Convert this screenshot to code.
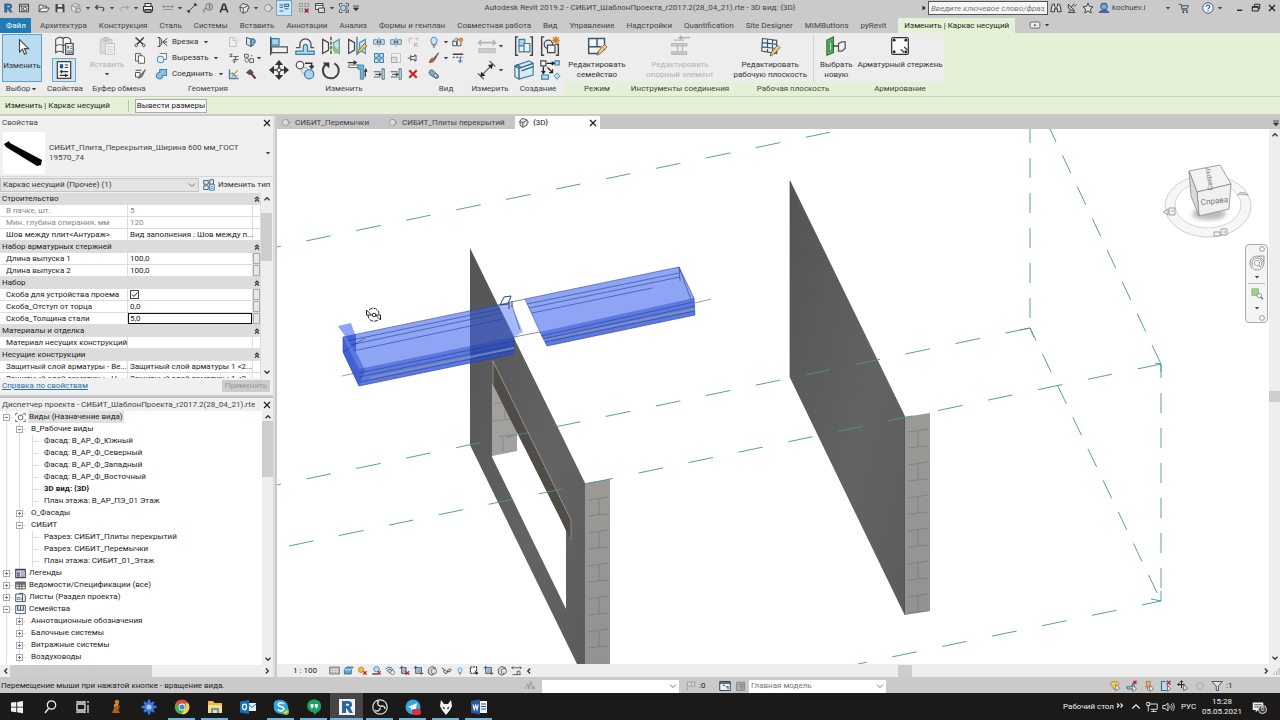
<!DOCTYPE html>
<html lang="ru">
<head>
<meta charset="utf-8">
<title>Autodesk Revit 2019.2</title>
<style>
  html, body {
    margin: 0;
    height: 100%;
  }

  body {
    font: 8px/12px Roboto, "Open Sans", sans-serif;
    color: #333;
    background: #cacaca;
    overflow: hidden;
  }
</style>
</head>
<body>
<revit-app></revit-app>

<script>
// ICONS: [viewBox size, markup]
const icons = {
  down: [8, '<path d="M1.8 3h4.4L4 5.6z" fill="#444"/>'],
  chevron: [8, '<path d="M1 2.5 4 5.5 7 2.5" fill="none" stroke="#777"/>'],
  close: [8, '<path d="M1 1l6 6M7 1 1 7" fill="none" stroke="#222" stroke-width="1.3"/>'],
  up: [8, '<path d="M1.5 5.2 4 2.7l2.5 2.5" fill="none" stroke="#333" stroke-width="1.3"/>'],
  dn: [8, '<path d="M1.5 2.8 4 5.3l2.5-2.5" fill="none" stroke="#333" stroke-width="1.3"/>'],
  lt: [8, '<path d="M5.2 1.5 2.7 4l2.5 2.5" fill="none" stroke="#333" stroke-width="1.3"/>'],
  rt: [8, '<path d="M2.8 1.5 5.3 4 2.8 6.5" fill="none" stroke="#333" stroke-width="1.3"/>'],
  fold: [8, '<path d="M2 4 4 2l2 2M2 6.5l2-2 2 2" fill="none" stroke="#333" stroke-width="1.1"/>'],
  overflow: [8, '<path d="M1 2h6M1.5 4h5L4 6.8z" fill="#333" stroke="#333" stroke-width=".8"/>'],
  play: [8, '<path d="M2.5 1.5 6 4 2.5 6.5z" fill="#333"/>'],

  logo: [16, '<path d="M3 2h6.5c5 0 5 6.500 1.500 7l3.500 5h-4L7.500 9.500H7V14H3z" fill="#2e689c"/><path d="M7 5h2.500c1.500 0 1.500 2 0 2H7z" fill="#cacaca"/>'],
  home: [16, '<rect x="2" y="3" width="12" height="10" fill="#e8e8e8" stroke="#444" stroke-width="1.300"/><path d="M2 5.500h12M5 5v8M7 8l2-1.500 3 2V11H7z" fill="none" stroke="#444" stroke-width="1.200"/>'],
  open: [16, '<path d="M1.500 13V4h4l1 1.500h5V8M1.500 13l3-5h10.500l-3 5z" fill="#eee" stroke="#444" stroke-width="1.200"/>'],
  save: [16, '<path d="M2 2.500h10.500l1.500 1.500v9.500H2z" fill="#444"/><path d="M5 3h6v3.500H5zM4.500 9h7v4.500h-7z" fill="#ddd"/>'],
  cube: [16, '<path d="M2 5l5-3 6 2v6l-5 4-6-3zM2 5l6 2 5-3M8 7v7" fill="#ddd" stroke="#888"/><circle cx="11" cy="11" r="3" fill="#ccc" stroke="#777"/>'],
  undo: [16, '<path d="M5 4 2 7l3 3M2.500 7H10c4 0 4 4 1 5" fill="none" stroke="#444" stroke-width="1.600"/>'],
  redo: [16, '<path d="M11 4l3 3-3 3M13.500 7H6c-4 0-4 4-1 5" fill="none" stroke="#999" stroke-width="1.300"/>'],
  print: [16, '<path d="M4 6V2h8v4M2 6h12v6H2zM4 10h8v4H4z" fill="#eee" stroke="#333" stroke-width="1.400"/>'],
  measure: [16, '<path d="M1 6h14M3 4 1 6l2 2M13 4l2 2-2 2M2 10h12" fill="none" stroke="#888" stroke-width="1.200"/>'],
  dimension: [16, '<path d="M3 13 13 3M1 11l4 4M11 1l4 4" stroke="#333" stroke-width="1.200"/><path d="M2 14l1-4 3 3zM14 2l-1 4-3-3z" fill="#333"/>'],
  tag: [16, '<circle cx="9.500" cy="6.500" r="4.500" fill="none" stroke="#555"/><path d="M3 14 2 11l3-3M9 4.500 10 4v5" fill="none" stroke="#555" stroke-width="1.200"/>'],
  letter: [16, '<path d="M3 14 7 3h2l4 11M5 10h6" fill="none" stroke="#333" stroke-width="2.200"/>'],
  house: [16, '<path d="M2 7l4-5 7 2 2 4-2 1v3l-6 3-4-3V7zM7 15V8l6-3M3 7l4 1" fill="#e4e4e4" stroke="#444" stroke-width="1.200"/>'],
  section: [16, '<path d="M9.500 3.500 14 8l-4.500 4.500" fill="none" stroke="#777" stroke-width="1.400"/><circle cx="8" cy="8" r="4.500" fill="#ddd" stroke="#888"/>'],
  lines: [16, '<path d="M2 4h5M2 7h5M2 12h5M9 3h5v3H9zM9 9h5" fill="none" stroke="#246a98" stroke-width="1.500"/>'],
  closewin: [16, '<path d="M2 2h4v4H2zM2 9h4v4H2zM9 2h5v4H9z" fill="none" stroke="#666" stroke-dasharray="1.500 1"/><path d="M9 9l5 5M14 9l-5 5" stroke="#a01e2c" stroke-width="2"/>'],
  switchwin: [16, '<path d="M2 2h10v8H2zM2 4.500h10" fill="#eee" stroke="#444" stroke-width="1.300"/><path d="M6 8h8v6H6z" fill="#ddd" stroke="#444" stroke-width="1.300"/>'],
  custom: [16, '<path d="M2 6V2h4M10 2h4v4M14 10v4h-4M6 14H2v-4" fill="none" stroke="#555" stroke-width="1.200"/><circle cx="7" cy="8" r="3.500" fill="#bcd8e8" stroke="#456"/><path d="M10 5h2v7H9" fill="none" stroke="#456"/>'],
  binoc: [16, '<path d="M3 3h3v3l1 1h2l1-1V3h3l2 10h-5V9H6v4H1z" fill="#ddd" stroke="#333" stroke-width="1.300"/>'],
  dish: [16, '<path d="M3 3c-1 5 2 9 8 8zM7 7l4-5M6 11l-3 3h9l-3-3M11 6l3-3" fill="none" stroke="#333" stroke-width="1.200"/>'],
  star: [16, '<path d="M8 1.500l2 4.500 4.800.4-3.600 3.200 1.100 4.900L8 12l-4.300 2.500 1.100-4.900L1.200 6.400 6 6z" fill="#ddd" stroke="#333" stroke-width="1.200"/>'],
  user: [16, '<circle cx="8" cy="6" r="4.200" fill="#86a9d8" stroke="#2d5593" stroke-width="1.400"/><path d="M1.500 14c0-4 13-4 13 0z" fill="#3d6db0" stroke="#2d5593"/>'],
  cart: [16, '<path d="M1 3h3l2 8h7M4.500 5H14l-2 4H6" fill="#bcd0e6" stroke="#345" stroke-width="1.200"/><circle cx="7" cy="13.500" r="1.200" fill="#333"/><circle cx="12" cy="13.500" r="1.200" fill="#333"/>'],
  help: [16, '<circle cx="8" cy="8" r="7" fill="#f2f5f8" stroke="#2c567e" stroke-width="1.200"/><path d="M5.800 6.300c0-3 4.600-3 4.600 0 0 1.500-2.300 1.700-2.300 3.400M8 11v1.600" fill="none" stroke="#2c567e" stroke-width="1.500"/>'],
  min: [16, '<path d="M4 11h7" stroke="#222" stroke-width="1.800"/>'],
  restore: [16, '<path d="M6 5V3h7v6h-2M3 6h8v6H3zM3 7h8" fill="none" stroke="#222" stroke-width="1.300"/>'],
  pill: [16, '<rect x="1.500" y="4" width="13" height="8" rx="2" fill="#eee" stroke="#444"/><path d="M6 9h4L8 6.500z" fill="#333"/>'],

  arrow: [24, '<path d="M9 3v15l3.600-3.400 2.400 6 2.400-1-2.500-5.700h5z" fill="#fff" stroke="#444" stroke-width="1.300"/>'],
  types: [24, '<path d="M2 4c3-3 7-3 9-1 2-2 6-2 9 1v8c-3-2-7-2-9 0-2-2-6-2-9 0zM11 3v9M2 12v8c3-2 7-2 9 0v-8" fill="#f2f4f5" stroke="#555" stroke-width="1.400"/><path d="M14 9h9v13h-9z" fill="#e9eef2" stroke="#444" stroke-width="1.400"/><path d="M16 12h2v3h-2z" fill="#2f6f9f"/><path d="M19.500 12.500h2M19.500 15h2M16 18h6M16 20h6" stroke="#555"/>'],
  props: [24, '<path d="M4 2h16v20H4z" fill="#f6f8f9" stroke="#444" stroke-width="1.500"/><path d="M7 5h4v5H7z" fill="#1d5c8c"/><path d="M13 6h4M13 9h4M7 14h10M7 18.500h10" stroke="#333" stroke-width="1.400"/><path d="M9 12v4M14 16.500v4" stroke="#333" stroke-width="1.700"/>'],
  paste: [24, '<path d="M4 4h14v17H4z" fill="#dcdcdc" stroke="#bdbdbd"/><path d="M8 2h6v4H8z" fill="#ccc" stroke="#b5b5b5"/><path d="M10 9h11v13H10z" fill="#f1f1f1" stroke="#bdbdbd"/><path d="M12 13h7M12 16h7M12 19h7" stroke="#c8c8c8"/>'],
  cut: [16, '<path d="M2 2l10 9M13 2 4 11" stroke="#333" stroke-width="1.800"/><circle cx="3" cy="12.500" r="1.800" fill="none" stroke="#444" stroke-width="1.200"/><circle cx="13" cy="12.500" r="1.800" fill="none" stroke="#444" stroke-width="1.200"/>'],
  copy: [16, '<path d="M2 2h7v10H2z" fill="#eee" stroke="#555" stroke-width="1.200"/><path d="M6 5h6l2 2v8H6z" fill="#fff" stroke="#555" stroke-width="1.200"/>'],
  match: [16, '<path d="M2 3h8M2 6h6v6H2z" fill="#fff" stroke="#555" stroke-width="1.300"/><path d="M15 2 9 9l-3 5 5-3z" fill="#7d95a5" stroke="#444"/>'],
  cope: [16, '<path d="M2 2h3v12H2M4.500 2l3 3v6l-3 3" fill="none" stroke="#444" stroke-width="1.300"/><path d="M15 3l-6 5 6 5M9 8h6" fill="none" stroke="#444" stroke-width="1.300"/>'],
  cutgeom: [16, '<path d="M5 2h9v8h-4" fill="#f4f4f4" stroke="#777" stroke-width="1.300"/><circle cx="6" cy="10" r="4.300" fill="#e8f2f7" stroke="#4f93b9" stroke-width="1.400"/>'],
  join: [16, '<path d="M5 2h9v8H9a4.300 4.300 0 1 1-4-4z" fill="#86c2e2" stroke="#3b86b0" stroke-width="1.400"/>'],
  wallgray: [16, '<path d="M2 2h5v4h4v8H2z" fill="#eee" stroke="#bbb" stroke-width="1.200"/><path d="M8 3h3l3 3-3 3" fill="none" stroke="#ccc"/>'],
  wallopen: [16, '<path d="M2 2l6 2v10l-6-3z" fill="#cfe5f0" stroke="#444" stroke-width="1.200"/><path d="M8 4c8-2 6 6 3 8l-3 2z" fill="#71b1d4" stroke="#356" stroke-width="1.200"/>'],
  beamjoin: [16, '<path d="M2 3h4M2 6h4M4 3v3M7 6h7M7 10h7M10 6v4M6 12h5M8.500 12v3" fill="none" stroke="#567" stroke-width="1.400"/>'],
  splitface: [16, '<path d="M2 3h5v4H2zM9 9h5v5H9z" fill="#eee" stroke="#555" stroke-width="1.200"/><circle cx="5" cy="11" r="2.500" fill="none" stroke="#555"/><path d="M10 5h3" stroke="#555"/>'],
  paint: [16, '<path d="M2 2v12h12" fill="none" stroke="#3c86ae" stroke-width="1.800"/><path d="M5 12 13 3M5 8l-2-1M9 12l4-2" stroke="#c9a04c" stroke-width="1.600"/><path d="M5 6l6 6" stroke="#4b91b5" stroke-width="1.500"/>'],
  hammer: [16, '<path d="M2 6l5-4 4 4-5 3z" fill="#556" stroke="#333"/><path d="M8 7l6 7" stroke="#7b2d28" stroke-width="2.600"/>'],
  align: [24, '<path d="M2 1v22" stroke="#444" stroke-width="1.600"/><path d="M3 3h9v8H3z" fill="#a9d4ea" stroke="#3580ab" stroke-width="1.500"/><path d="M3 13h19v7H3z" fill="#f3f3f3" stroke="#555" stroke-width="1.500"/>'],
  offset: [24, '<path d="M1 14h5c-3-14 16-14 13 0h4" fill="none" stroke="#555" stroke-width="1.500"/><path d="M1 18h9v-5c0-4 5-4 5 0v5h8v4H1z" fill="#b5d9ea" stroke="#3480aa" stroke-width="1.500"/>'],
  mirror: [24, '<path d="M2 4l7 4v9l-7 4z" fill="#f4f4f4" stroke="#444" stroke-width="1.500"/><path d="M22 4l-7 4v9l7 4z" fill="#bfe0e6" stroke="#6d9d9d" stroke-width="1.500"/><path d="M12 1v22" stroke="#333" stroke-dasharray="4 1.500" stroke-width="1.500"/><path d="M15 10l4 6 2-2v7h-6l1.500-2-3-5z" fill="#92bd7d"/>'],
  mirror2: [24, '<path d="M2 4l7 4v9l-7 4z" fill="#f4f4f4" stroke="#444" stroke-width="1.500"/><path d="M22 4l-7 4v9l7 4z" fill="#cfe6ef" stroke="#5295b8" stroke-width="1.500"/><path d="M12 1v22" stroke="#2e75a2" stroke-width="1.500"/><path d="M13 21l1-4 7-8 3 3-8 7z" fill="#f5c95e" stroke="#6a5530"/>'],
  move: [24, '<path d="M12 0l5 6h-4v4h-2V6H7zM12 24l5-6h-4v-4h-2v4H7zM0 12l6-5v4h4v2H6v4zM24 12l-6-5v4h-4v2h4v4z" fill="#333"/><path d="M10 10h4v4h-4z" fill="#fff" stroke="#333"/>'],
  copyel: [24, '<circle cx="6" cy="6" r="4.500" fill="#f8f8f8" stroke="#555" stroke-width="1.500"/><circle cx="12" cy="13" r="4" fill="none" stroke="#78aac4"/><circle cx="17" cy="17" r="5.500" fill="#a9d4ea" stroke="#3580ab" stroke-width="1.500"/><path d="M12 4h8v5M17.500 7l2.500 3 2.500-3" fill="none" stroke="#333" stroke-width="1.800"/>'],
  rotate: [24, '<path d="M6 5a9.500 9.500 0 1 0 10-1" fill="none" stroke="#444" stroke-width="2.400"/><path d="M2 3h8v7z" fill="#333"/>'],
  trim: [24, '<path d="M2 6h12v3H2z" fill="#fff" stroke="#555"/><path d="M13 6h7v17h-4V11h-3z" fill="#6db5d9" stroke="#3580ab"/><path d="M1 3h9M8 1l3 2-3 2M22 20V12M21 14l1.500-3L24 14" fill="none" stroke="#333" stroke-width="1.500"/>'],
  split: [16, '<path d="M1 5h5v6H1zM10 5h5v6h-5z" fill="#cfe6f1" stroke="#4a80a0" stroke-width="1.200"/><path d="M8 2v12M4 8h8" stroke="#456"/>'],
  array: [16, '<path d="M2 2h5v5H2zM9 2h5v5H9zM2 9h5v5H2zM9 9h5v5H9z" fill="#c6e3f1" stroke="#2f7ca8" stroke-width="1.300"/>'],
  trimone: [16, '<path d="M12 1h3v14h-3z" fill="#cfe6f1" stroke="#467" stroke-width="1.200"/><path d="M1 5h9M1 12h9" stroke="#467" stroke-width="1.500"/><path d="M3 8.500h7M8 6.500l3 2-3 2" fill="none" stroke="#222" stroke-width="1.200"/>'],
  unpin: [16, '<path d="M3 3h5M3 3v6M9 9l5 5M14 9l-5 5M11 3h3v3" fill="none" stroke="#bbb" stroke-width="1.500"/>'],
  scale: [16, '<path d="M2 2h12v12H2z" fill="#f1f1f1" stroke="#c4c4c4" stroke-width="1.300"/><path d="M2 7h7v7H2z" fill="#e1e1e1" stroke="#aaa" stroke-width="1.300"/>'],
  pin: [16, '<path d="M5 4v8M5 6h5V4h2v8h-2v-2H5M1 8h4" fill="#eee" stroke="#555" stroke-width="1.300"/>'],
  del: [16, '<path d="M3 3l10 10M13 3 3 13" stroke="#c9252b" stroke-width="3"/>'],
  bulb: [16, '<path d="M8 1.500a4.500 4.500 0 0 0-3 7.500v2h6V9a4.500 4.500 0 0 0-3-7.500z" fill="#cde6f5" stroke="#4b86b5" stroke-width="1.300"/><path d="M6 13h4M7 15h2" stroke="#555" stroke-width="1.300"/>'],
  override: [16, '<path d="M1 7h5v6H1zM7 5h5v8H7z" fill="#eee" stroke="#555" stroke-width="1.300"/><circle cx="12" cy="5" r="3" fill="#e98a3a"/><path d="M1 7l4-4h3" fill="none" stroke="#555"/>'],
  brush: [16, '<path d="M14 1 8 8l1.500 1.500z" fill="#666" stroke="#444"/><path d="M2 14c1-6 5-7 7-4-1 3-4 4-7 4z" fill="#b2673d" stroke="#6a3a22"/>'],
  linework: [16, '<path d="M1 3h14" stroke="#444" stroke-width="2"/><path d="M1 7h14" stroke="#444" stroke-width="1.300" stroke-dasharray="3 1.500"/><path d="M11 8v7M8 12h6" stroke="#3580ab" stroke-width="1.600"/>'],
  pipe: [16, '<path d="M3 3c3-2 6 3 10 6 3 4-1 6-4 4L3 9C1 7 1 5 3 3z" fill="#7aacc5" stroke="#456" stroke-width="1.200"/><circle cx="10" cy="10" r="2.200" fill="#dfeaf0" stroke="#456"/>'],
  measuregray: [24, '<path d="M2 8h20M5 5 2 8l3 3M19 5l3 3-3 3" fill="none" stroke="#b5b5b5" stroke-width="2"/><path d="M2 15h20v5H2z" fill="#ccc" stroke="#bbb"/>'],
  dimbig: [24, '<path d="M4 20 19 5M1 16l7 7M15 1l7 7" stroke="#555" stroke-width="1.500"/><path d="M4 20l1-6 5 5zM19 5l-1 6-5-5z" fill="#222"/>'],
  group: [24, '<path d="M5 1H2v22h3M19 1h3v22h-3" fill="none" stroke="#444" stroke-width="1.700"/><path d="M6 4h7v8H6z" fill="#a9d4ea" stroke="#3580ab" stroke-width="1.400"/><path d="M6 12h6v7H6zM12 9h7v10h-7z" fill="#e7f1f5" stroke="#447a99" stroke-width="1.400"/>'],
  assembly: [24, '<path d="M5 1H2v22h3M19 10h3v13h-3" fill="none" stroke="#444" stroke-width="1.700"/><circle cx="10" cy="10" r="5" fill="#e4eef4" stroke="#444" stroke-width="1.400"/><path d="M9 11h9v9H9z" fill="#f4f4f4" stroke="#444" stroke-width="1.400"/><circle cx="19" cy="5" r="3.300" fill="#f2a44a"/><path d="M19 0v10M14 5h10M15.500 1.500l7 7M22.500 1.500l-7 7" stroke="#d87a26" stroke-width="1.300"/>'],
  parts: [24, '<path d="M1 7 18 1l5 3v14L6 23l-5-3z" fill="#d6ebf4" stroke="#447a99" stroke-width="1.400"/><path d="M1 7l5 3 17-6M3 5.500l5 3M6 10v13M9 13l14-5" fill="none" stroke="#2d6484" stroke-width="1.600"/>'],
  similar: [24, '<path d="M1 1h6v6H1z" fill="#fff" stroke="#444" stroke-width="1.400"/><path d="M18 1h5v5h-5zM2 18h8v5H2z" fill="#bfe0ef" stroke="#3580ab" stroke-width="1.400"/><path d="M17 19l3.500-3.500L24 19l-3.500 4z" fill="#bfe0ef" stroke="#3580ab"/><path d="M8 4h8M14 2l3 2-3 2M4 8v8M2 13l2 3 2-3M9 9l6 6M15 11v4h-4" fill="none" stroke="#222" stroke-width="1.500"/>'],
  editfamily: [24, '<path d="M2 3h10v10H2zM12 3h9v14M2 13v8h10l4-4M12 13h5" fill="#f4f8fa" stroke="#3d5868" stroke-width="1.800"/><path d="M12 23l2-5 7-8 3 3-8 8z" fill="#f6cf69" stroke="#555"/>'],
  beamgray: [24, '<path d="M5 5h12M9 9v10M15 9v10M2 9h18v3H2zM2 19h18v3H2z" fill="#ccc" stroke="#b8b8b8" stroke-width="1.400"/><path d="M11 2H24M14 0l-3 2 3 2" fill="none" stroke="#aaa" stroke-width="1.500"/>'],
  plane: [24, '<path d="M3 3l17 2v16L2 18zM2.500 8l17.500 2M2.500 13l17 2M9 4v15M15 4v16" fill="#eaf3f7" stroke="#456" stroke-width="1.400"/><path d="M12 24l2-5 7-8 3 3-8 8z" fill="#f6cf69" stroke="#555"/>'],
  newhost: [24, '<path d="M1 5l8-4v19l-8 3z" fill="#5eb05b" stroke="#287137" stroke-width="1.300"/><path d="M4 8l3-2v11l-3 2z" fill="#bfe3b8" stroke="#287137"/><path d="M9 12h7" stroke="#333" stroke-width="1.600"/><path d="M15 9l4-2h4v8l-4 3h-4z" fill="#eee" stroke="#555" stroke-width="1.500"/>'],
  rebar: [24, '<rect x="2" y="2" width="20" height="20" rx="2" fill="#fafafa" stroke="#333" stroke-width="1.500"/><path d="M13 16l4 4M17 13l4 4" stroke="#333" stroke-width="1.500"/><circle cx="5" cy="5" r="1.700" fill="#222"/><circle cx="19" cy="5" r="1.700" fill="#222"/><circle cx="5" cy="19" r="1.700" fill="#222"/><circle cx="19" cy="19" r="1.700" fill="#222"/>'],

  edittype: [16, '<path d="M1 2h6v5H1zM9 1h5v6H9zM1 9h6v5H1z" fill="#dcebf3" stroke="#456" stroke-width="1.200"/><path d="M9 7h6v8H9z" fill="#eef5f9" stroke="#2d6f9b" stroke-width="1.200"/><path d="M10.500 10h3M10.500 12.500h3" stroke="#2d6f9b"/>'],
  slab: [42, '<path d="M1 12 6 9l1 2 32 17-1 5-4 1L3 15z" fill="#050505"/>'],
  views: [16, '<path d="M4 2H1v3M1 11v3h3M12 14h3v-3M15 5V2h-3" fill="none" stroke="#555" stroke-width="1.200"/><circle cx="8" cy="8" r="3.500" fill="#fff" stroke="#444" stroke-width="1.200"/><path d="M10 5l2-2" stroke="#444"/>'],
  legend: [16, '<path d="M1 2h14v12H1z" fill="#dfe4ec" stroke="#445" stroke-width="1.600"/><path d="M1 4h14M3 7h4v2H3zM3 11h4v1H3zM9 7h4M9 10h4M9 12h4" fill="#86a" stroke="#556"/>'],
  schedule: [16, '<path d="M1 3h14v10H1zM1 6h14M1 9h14M6 3v10M10 3v10" fill="#fff" stroke="#444" stroke-width="1.300"/><path d="M1 3h14v2.500H1z" fill="#567"/>'],
  sheets: [16, '<path d="M1 3h10v11H1zM6 2h6l3 3v9h-4" fill="#f1f5f8" stroke="#445" stroke-width="1.300"/><path d="M3 8h4v3H3zM9 8v4" fill="none" stroke="#469"/>'],
  family: [16, '<path d="M1 2h14v12H1z" fill="#f6f8fa" stroke="#556" stroke-width="1.400"/><path d="M4 3v6h8V3M8 3v6" fill="none" stroke="#357" stroke-width="1.600"/>'],

  detail: [16, '<path d="M1 3h14v10H1z" fill="#ddd" stroke="#444"/><path d="M1 5h14M1 8h14M1 11h14" stroke="#777" stroke-dasharray="1 1"/>'],
  style: [16, '<path d="M2 6l4-3h9l-3 4v6H2z" fill="#62a8ca" stroke="#256483" stroke-width="1.200"/><path d="M2 7h9l3-3" fill="none" stroke="#fff"/>'],
  sun: [16, '<circle cx="6" cy="7" r="4" fill="#f5b949" stroke="#b97b1e"/><path d="M9 9l5 5M14 9l-5 5" stroke="#c8242b" stroke-width="2"/>'],
  shadow: [16, '<circle cx="8" cy="6" r="4" fill="#b7dcee" stroke="#469"/><path d="M2 13h8" stroke="#444" stroke-width="2"/><path d="M10 9l4 5M14 9l-4 5" stroke="#c8242b" stroke-width="1.800"/>'],
  render: [16, '<path d="M1 6c3-5 10-3 11 2M3 8l4-2 4 3-4 3z" fill="#c6e0ed" stroke="#456" stroke-width="1.200"/><circle cx="11" cy="11" r="3" fill="#eee" stroke="#469"/>'],
  crop: [16, '<path d="M4 1v11h11M1 4h9v10" fill="none" stroke="#445" stroke-width="1.500"/><path d="M5 6h4v5H5z" fill="#7eb3d2"/><path d="M10 9l5 5M15 9l-5 5" stroke="#c8242b" stroke-width="1.600"/>'],
  crop2: [16, '<path d="M4 1v11h11M1 4h11v10" fill="none" stroke="#445" stroke-width="1.500"/><path d="M6 6h5v5H6z" fill="#7eb3d2"/>'],
  lock: [16, '<path d="M2 6l5-4 5 2v8l-5 3-5-3z" fill="#ddd" stroke="#444" stroke-width="1.200"/><circle cx="10" cy="9" r="4" fill="#cbe4ee" stroke="#456"/>'],
  glasses: [16, '<path d="M1 4l4 3M6 12c-4-2-2-6 1-4s3 5-1 4zM9 9l3 1c4-1 3-5 0-4L9 9z" fill="#dcecf2" stroke="#333" stroke-width="1.300"/>'],
  worksharing: [16, '<path d="M2 3h9v9H2z" fill="#fff" stroke="#222" stroke-dasharray="3 1" stroke-width="1.600"/><path d="M8 8l6 4-4 2z" fill="#222"/>'],
  constraint: [16, '<path d="M1 4h14M3 2 1 4l2 2M13 2l2 2-2 2M2 14h12M9 14V9h4v5" fill="none" stroke="#444" stroke-width="1.200"/>'],

  wheel: [16, '<circle cx="8" cy="8" r="7" fill="#f0f0f0" stroke="#999"/><path d="M4 11a5 5 0 1 1 7 1l-1-2" fill="none" stroke="#999"/><circle cx="8" cy="8" r="2.600" fill="#fff" stroke="#aaa"/><path d="M10 1h5v5z" fill="#eee" stroke="#999"/>'],
  zoomregion: [16, '<path d="M1 1h9v9H1z" fill="#9fce87" stroke="#8ab873"/><circle cx="11" cy="10" r="3" fill="#f7f7f7" stroke="#778"/><path d="M13 12l3 3" stroke="#446ab0" stroke-width="1.500"/>'],
  knob: [8, '<circle cx="4" cy="4" r="2.400" fill="#fafafa" stroke="#999"/>'],

  editable: [16, '<path d="M2 12l3-7 3 7M6 12l3-10 3 10M11 12l2-4 1 4" fill="none" stroke="#999" stroke-width="1.300"/>'],
  press: [16, '<path d="M3 14V3h6v5H4M9 3l4-1v6l-4 1" fill="#ddd" stroke="#999" stroke-width="1.200"/>'],
  options: [16, '<path d="M1 2h14v12H1z" fill="#eef3f6" stroke="#345" stroke-width="1.300"/><path d="M1 4h14" stroke="#345" stroke-width="2"/><path d="M5 7h3M9 9h3v3" fill="none" stroke="#357" stroke-width="1.500"/>'],
  optgray: [16, '<path d="M2 3h11v11H2zM5 6h8M6 9h7M9 6v7" fill="#aaa" stroke="#888" stroke-width="1.200"/>'],
  selbulb: [16, '<path d="M2 5c0-4 11-4 11 0 0 3-3 3-3 7H6c0-4-4-4-4-7z" fill="#f1c965" stroke="#9b7c2d"/><path d="M9 6v8l5-3z" fill="#fff" stroke="#555"/>'],
  sellink: [16, '<path d="M1 9h6l3-6 2 9H2z" fill="#b9dcec" stroke="#357" stroke-width="1.200"/><path d="M10 1l4 4M14 1l-4 4" stroke="#c8242b" stroke-width="1.800"/><path d="M9 7v8l5-3z" fill="#fff" stroke="#555"/>'],
  selpin: [16, '<path d="M4 2h6l-1 5 2 2H3l2-2zM6 9v5" fill="#f0b269" stroke="#a5662c"/><path d="M9 7v8l5-3z" fill="#fff" stroke="#555"/>'],
  selface: [16, '<path d="M7 2H2v12h7" fill="#b9dcec" stroke="#29729e" stroke-width="1.500"/><path d="M9 1l5 5M14 1 9 6" stroke="#c8242b" stroke-width="1.800"/><path d="M10 7v8l4-3z" fill="#fff" stroke="#555"/>'],
  seldrag: [16, '<path d="M1 6h9M6 1v10M4 3l2-2 2 2M3 4 1 6l2 2" fill="none" stroke="#222" stroke-width="1.300"/><path d="M9 6v8l5-3z" fill="#fff" stroke="#333"/>'],
  gear: [16, '<circle cx="8" cy="8" r="4.500" fill="none" stroke="#aaa" stroke-width="2" stroke-dasharray="2 1"/>'],
  filter: [16, '<path d="M1 2h14L10 8v6H7V8z" fill="#d9e3ee" stroke="#445" stroke-width="1.200"/>'],
  grip: [8, '<path d="M7 1v7M4.500 4v4M2 6v2" stroke="#aaa"/>'],

  win: [16, '<path d="M2 3.500 7.300 3v4.700H2zM8.200 2.900 14 2v5.700H8.200zM2 8.500h5.300v4.700L2 12.600zM8.200 8.500H14v5.700l-5.800-.9z" fill="#f2f2f2"/>'],
  search: [16, '<circle cx="9.500" cy="6" r="4.200" fill="none" stroke="#eee" stroke-width="1.200"/><path d="M6.500 9.500 3 14" stroke="#eee" stroke-width="1.300"/>'],
  taskview: [16, '<path d="M2 5h8v6H2zM2 2v1h8V2M2 14v-1h8v1M13 2v2M13 6v8" fill="none" stroke="#ddd" stroke-width="1.300"/>'],
  figure: [16, '<circle cx="9" cy="3" r="2.300" fill="#c88033"/><circle cx="9.500" cy="8" r="2.200" fill="#a8601f"/><path d="M6 5l5 1-1 4 2 4H4l2-5z" fill="#a8601f"/><path d="M6 7l4-2" stroke="#efb45d" stroke-width="1.300"/>'],
  flower: [16, '<g fill="#3a74e8"><ellipse cx="8" cy="8" rx="2" ry="8"/><ellipse cx="8" cy="8" rx="8" ry="2"/><ellipse cx="8" cy="8" rx="2" ry="7.500" transform="rotate(45 8 8)"/><ellipse cx="8" cy="8" rx="2" ry="7.500" transform="rotate(-45 8 8)"/></g><circle cx="8" cy="8" r="2.500" fill="#a9c9ff"/>'],
  chrome: [16, '<circle cx="8" cy="8" r="7.300" fill="#4caf50"/><path d="M8 .7A7.300 7.300 0 0 1 14.500 4.500H8A3.500 3.500 0 0 0 4.700 7L2 3.900A7.300 7.300 0 0 1 8 .7z" fill="#e04a3a"/><path d="M14.500 4.500a7.300 7.300 0 0 1-7 10.800L11 10a3.500 3.500 0 0 0 0-5.500z" fill="#fbd24a"/><circle cx="8" cy="8" r="3.400" fill="#fff"/><circle cx="8" cy="8" r="2.600" fill="#4a83e6"/>'],
  folder: [16, '<path d="M1 2h5l1.500 2H15v10H1z" fill="#e9b94c"/><path d="M1 6h14v8H1z" fill="#f9dc85"/><path d="M4 9h8v5h-2v-3H6v3H4z" fill="#4da0c9"/>'],
  outlook: [16, '<path d="M8 4h8v8H8z" fill="#e9f2fa"/><path d="M8 5l4 3.500L16 5" fill="none" stroke="#2579bd"/><path d="M0 2.500 9 1v14L0 13.500z" fill="#1072bb"/><ellipse cx="4.500" cy="8" rx="2" ry="2.800" fill="none" stroke="#fff" stroke-width="1.300"/>'],
  skype: [16, '<path d="M5 1c5-1 10 2 10 7 2 5-2 8-6 7C3 15 0 11 1 7c-1-3 1-6 4-6z" fill="#27a7e8"/><path d="M11 5C9 3 5 3.500 5.200 5.800 5.500 8 11 7 10.800 9.800 10.500 12.500 6 12.300 4.800 10.500" fill="none" stroke="#fff" stroke-width="1.700"/><circle cx="13" cy="13" r="3" fill="#8bbf3c"/><path d="M11.500 13l1 1 2-2" fill="none" stroke="#fff"/>'],
  hangouts: [16, '<path d="M8 .5c9 0 9 11 3 13L8 16v-2.500C-1 13-1 .5 8 .5z" fill="#1ba261"/><path d="M4.500 5h3v3L6 9.500H5l.7-1.500H4.500zM8.800 5h3v3l-1.500 1.500h-1L10 8H8.800z" fill="#fff"/>'],
  revit: [16, '<path d="M0 0h16v16H0z" fill="#eef3f8"/><path d="M3 2h6.500c4.500 0 4.500 6 1.500 6.500L14 14h-3.500L7.500 9.200H7V14H3z" fill="#2a659d"/><path d="M7 4.800h2c1.500 0 1.500 2 0 2H7z" fill="#eef3f8"/>'],
  obs: [16, '<circle cx="8" cy="8" r="7.200" fill="#1b1b1b" stroke="#ddd" stroke-width="1.200"/><path d="M8 7c-3-1-3-4-1-5M8 8c2-2 5-1 5 2M8 9c0 3-3 4-5 2" fill="none" stroke="#ddd" stroke-width="1.500"/>'],
  telegram: [16, '<circle cx="8" cy="8" r="7.500" fill="#35a5dc"/><path d="M3 8l9-4-1.500 8-3-2.200L6 11.500V9z" fill="#fff"/><rect x="7" y="10" width="9" height="6" rx="2.500" fill="#e0303d"/>'],
  foobar: [16, '<path d="M3 1l3 4h4l3-4 1 6-2 4-4 5-4-5-2-4z" fill="#f4f4f4"/><path d="M4.500 7.500 7 9l-1 1.500zM11.500 7.500 9 9l1 1.500z" fill="#111"/>'],
  word: [16, '<path d="M8 2h8v12H8z" fill="#eef3fa"/><path d="M10 5h5M10 7.500h5M10 10h5" stroke="#2b579a"/><path d="M0 2l9-1.500v15L0 14z" fill="#2b579a"/><path d="M2 5.500l1.200 5L4.700 6l1.300 4.500 1.200-5" fill="none" stroke="#fff" stroke-width="1.100"/>'],
  more: [8, '<path d="M1 .5 3 2.500 1 4.500M4.500 .5l2 2-2 2" fill="none" stroke="#eee" stroke-width="1.200"/>'],
  tray: [16, '<path d="M3 10l5-5 5 5" fill="none" stroke="#eee" stroke-width="1.500"/>'],
  network: [16, '<path d="M4 4h11v7H6M7 14h7M10 11v3M1 2h4v4H1zM3 6v8" fill="none" stroke="#ddd" stroke-width="1.300"/>'],
  sound: [16, '<path d="M1 6h3l4-3v10l-4-3H1z" fill="none" stroke="#eee" stroke-width="1.200"/><path d="M10 6c1 1 1 3 0 4M12 4c2 2 2 6 0 8M14 2.500c3 3 3 8 0 11" fill="none" stroke="#eee" stroke-width="1.100"/>'],
  note: [16, '<path d="M1 2h14v10H8l-3 3v-3H1z" fill="#f2f2f2"/><path d="M3 5h10M3 8h10" stroke="#222"/>']
};

// every part keeps its markup in a static template string
class Part extends HTMLElement {
  constructor() {
    super();
    this.attachShadow({ mode: 'open' });
    const template = document.createElement('template');
    template.innerHTML = `<style>
      :host { box-sizing: border-box; }
      *, *::before, *::after { box-sizing: border-box; }
      button, input, select {
        font: inherit; color: inherit; margin: 0; padding: 0;
        border: 0; border-radius: 0; background: none; outline: none;
      }
    </style>` + this.constructor.template;
    this.shadowRoot.appendChild(template.content.cloneNode(true));
  }
}

class UiIcon extends Part {
  static observedAttributes = ['name'];
  static template = `
    <style>
      :host { display: block; flex: none; width: var(--icon, 16px); height: var(--icon, 16px); }
      :host([small]) { --icon: 8px; }
      :host([mid]) { --icon: 12px; }
      :host([big]) { --icon: 20px; }
      svg { display: block; width: 100%; height: 100%; overflow: visible; }
    </style>
    <svg aria-hidden="true"></svg>`;
  attributeChangedCallback() {
    const [size, body] = icons[this.getAttribute('name')];
    const svg = this.shadowRoot.querySelector('svg');
    svg.setAttribute('viewBox', `0 0 ${size} ${size}`);
    svg.innerHTML = body;
  }
}

// ICON BUTTON: <tool-button icon="...">, optional "menu" arrow
class ToolButton extends Part {
  static template = `
    <style>
      :host { display: flex; align-items: center; }
      button { display: flex; align-items: center; justify-content: center; width: var(--cell, 16px); height: var(--cell, 16px); }
      :host([on]) .main { background: #cfe5f3; border: 1px solid #6ea9cd; }
      .menu { width: 8px; height: 8px; }
    </style>
    <button class="main" type="button"><ui-icon></ui-icon></button>`;
  connectedCallback() {
    const name = this.getAttribute('icon');
    const main = this.shadowRoot.querySelector('.main');
    main.setAttribute('aria-label', this.getAttribute('label') || name);
    main.querySelector('ui-icon').setAttribute('name', name);
    if (this.hasAttribute('menu')) {
      main.insertAdjacentHTML('afterend',
        '<button class="menu" type="button" aria-label="Меню"><ui-icon small name="down"></ui-icon></button>');
    }
  }
}

class TitleBar extends Part {
  static template = `
    <style>
      :host { display: grid; grid-template-columns: 1fr auto 1fr; align-items: center; height: 16px; background: #cacaca; color: #444; --icon: 12px; }
      .group { display: flex; align-items: center; }
      .right { justify-content: flex-end; }
      .sep { width: 4px; }
      .wide { width: 8px; }
      input { width: 120px; height: 14px; border: 1px solid #555; background: #f6f6f6; padding: 0 2px; font-style: italic; }
      input::placeholder { color: #777; opacity: 1; }
      .name { width: 52px; }
      h1 { margin: 0; font: inherit; white-space: nowrap; }
    </style>
    <div class="group">
      <tool-button icon="logo"></tool-button><tool-button icon="home"></tool-button><span class="sep"></span>
      <tool-button icon="open"></tool-button><tool-button icon="save"></tool-button>
      <tool-button icon="cube" menu></tool-button><tool-button icon="undo" menu></tool-button>
      <tool-button icon="redo" menu></tool-button><tool-button icon="print"></tool-button><span class="sep"></span>
      <tool-button icon="measure" menu></tool-button><tool-button icon="dimension"></tool-button>
      <tool-button icon="tag"></tool-button><tool-button icon="letter"></tool-button><span class="sep"></span>
      <tool-button icon="house" menu></tool-button><tool-button icon="section"></tool-button>
      <tool-button icon="lines" on></tool-button><span class="sep"></span>
      <tool-button icon="closewin"></tool-button><tool-button icon="switchwin" menu></tool-button>
      <tool-button icon="custom"></tool-button><ui-icon small name="overflow"></ui-icon>
    </div>
    <h1>Autodesk Revit 2019.2 - СИБИТ_ШаблонПроекта_r2017.2(28_04_21).rte - 3D вид: {3D}</h1>
    <div class="group right">
      <ui-icon small name="play"></ui-icon>
      <input type="text" placeholder="Введите ключевое слово/фразу" aria-label="Поиск">
      <tool-button icon="binoc"></tool-button><tool-button icon="dish"></tool-button>
      <tool-button icon="star"></tool-button><tool-button icon="user"></tool-button>
      <span class="name">kochuev.i</span><ui-icon small name="down"></ui-icon><span class="sep"></span>
      <tool-button icon="cart"></tool-button><span class="wide"></span>
      <tool-button icon="help" menu></tool-button><span class="wide"></span>
      <tool-button icon="min"></tool-button><tool-button icon="restore"></tool-button>
      <tool-button icon="close" style="--icon:8px"></tool-button>
    </div>`;
}

class RibbonTabs extends Part {
  static template = `
    <style>
      :host { display: flex; align-items: flex-end; height: 17px; background: #cacaca; }
      button { padding: 0 6px; height: 15px; white-space: nowrap; color: #444; }
      .file { background: #1f7cb4; color: #fff; width: 31px; margin-right: 3px; }
      .active { background: #e3f2d7; color: #222; margin-left: 6px; }
      .extra { display: flex; align-items: center; margin-left: 12px; --icon: 12px; }
    </style>
    <nav style="display:flex"></nav>
    <div class="extra"><tool-button icon="pill" menu></tool-button></div>`;
  connectedCallback() {
    const tabs = ['Файл', 'Архитектура', 'Конструкция', 'Сталь', 'Системы', 'Вставить', 'Аннотации', 'Анализ',
      'Формы и генплан', 'Совместная работа', 'Вид', 'Управление', 'Надстройки', 'Quantification',
      'Site Designer', 'MIMButtons', 'pyRevit', 'Изменить | Каркас несущий'];
    this.shadowRoot.querySelector('nav').innerHTML = tabs.map((tab, i) => {
      const cls = i === 0 ? 'file' : i === tabs.length - 1 ? 'active' : '';
      return `<button type="button" class="${cls}">${tab}</button>`;
    }).join('');
  }
}

class RibbonPanel extends Part {
  static template = `
    <style>
      :host { display: flex; flex-direction: column; flex: none; background: #ededed; }
      .tools { display: flex; flex: 1; align-items: flex-start; justify-content: center; padding-top: 1px; }
      .title { display: flex; justify-content: center; align-items: center; height: 14px; white-space: nowrap; color: #444; }
      :host([context]) .title { background: #e3f2d7; }
    </style>
    <div class="tools"><slot></slot></div>
    <div class="title"><span></span></div>`;
  connectedCallback() {
    this.style.width = this.getAttribute('width') + 'px';
    this.shadowRoot.querySelector('span').textContent = this.getAttribute('caption');
    if (this.hasAttribute('menu')) {
      this.shadowRoot.querySelector('.title').insertAdjacentHTML('beforeend', '<ui-icon small name="down"></ui-icon>');
    }
  }
}

class BigButton extends Part {
  static template = `
    <style>
      :host { display: block; }
      button { display: flex; flex-direction: column; align-items: center; height: 48px; padding: 2px 0 0; line-height: 10px; white-space: nowrap; }
      :host([on]) button { width: 40px; background: #b9dcf1; border: 1px solid #5ba0cb; }
      :host([off]) button { color: #b3b3b3; }
      .label { margin-top: 4px; }
    </style>
    <button type="button"><ui-icon big></ui-icon><span class="label"><slot></slot></span></button>`;
  connectedCallback() {
    this.shadowRoot.querySelector('ui-icon').setAttribute('name', this.getAttribute('icon'));
    if (this.hasAttribute('menu')) {
      this.shadowRoot.querySelector('button').insertAdjacentHTML('beforeend', '<ui-icon small name="down"></ui-icon>');
    }
  }
}

class RibbonBar extends Part {
  static template = `
    <style>
      :host { display: flex; height: 64px; background: #e3f2d7; border-bottom: 1px solid #c8d4be; overflow: hidden; }
      .col { display: grid; grid-auto-rows: 16px; align-items: center; --icon: 12px; }
      .cols { display: grid; grid-template-columns: repeat(var(--n), 17px); grid-auto-rows: 16px; align-items: center; --icon: 12px; }
      .grid { display: grid; grid-template-columns: repeat(var(--n), 26px); grid-auto-rows: 24px; align-items: center; --icon: 20px; --cell: 24px; }
      .named { display: flex; align-items: center; gap: 4px; white-space: nowrap; height: 16px; }
      .sep { width: 1px; height: 48px; background: #d4d4d4; margin: 0 6px; }
    </style>
    <ribbon-panel width="44" caption="Выбор" menu><big-button icon="arrow" on>Изменить</big-button></ribbon-panel>
    <ribbon-panel width="42" caption="Свойства">
      <div class="grid" style="--n:1"><tool-button icon="types"></tool-button><tool-button icon="props" on></tool-button></div>
    </ribbon-panel>
    <ribbon-panel width="66" caption="Буфер обмена">
      <big-button icon="paste" off menu>Вставить</big-button>
      <div class="col" style="margin-left:8px"><tool-button icon="cut"></tool-button><tool-button icon="copy"></tool-button><tool-button icon="match"></tool-button></div>
    </ribbon-panel>
    <ribbon-panel width="112" caption="Геометрия">
      <div class="col" style="width:70px">
        <button class="named" type="button"><ui-icon name="cope"></ui-icon>Врезка<ui-icon small name="down"></ui-icon></button>
        <button class="named" type="button"><ui-icon name="cutgeom"></ui-icon>Вырезать<ui-icon small name="down"></ui-icon></button>
        <button class="named" type="button"><ui-icon name="join"></ui-icon>Соединить<ui-icon small name="down"></ui-icon></button>
      </div>
      <div class="cols" style="--n:2">
        <tool-button icon="wallgray"></tool-button><tool-button icon="wallopen"></tool-button>
        <tool-button icon="beamjoin"></tool-button><tool-button icon="splitface" menu></tool-button>
        <tool-button icon="paint"></tool-button><tool-button icon="hammer"></tool-button>
      </div>
    </ribbon-panel>
    <ribbon-panel width="160" caption="Изменить">
      <div class="grid" style="--n:4">
        <tool-button icon="align"></tool-button><tool-button icon="offset"></tool-button><tool-button icon="mirror"></tool-button><tool-button icon="mirror2"></tool-button>
        <tool-button icon="move"></tool-button><tool-button icon="copyel"></tool-button><tool-button icon="rotate"></tool-button><tool-button icon="trim"></tool-button>
      </div>
      <div class="cols" style="--n:3">
        <tool-button icon="split"></tool-button><tool-button icon="split"></tool-button><tool-button icon="unpin"></tool-button>
        <tool-button icon="array"></tool-button><tool-button icon="scale"></tool-button><tool-button icon="pin"></tool-button>
        <tool-button icon="trimone"></tool-button><tool-button icon="trimone"></tool-button><tool-button icon="del"></tool-button>
      </div>
    </ribbon-panel>
    <ribbon-panel width="44" caption="Вид">
      <div class="col"><tool-button icon="bulb" menu></tool-button><tool-button icon="brush" menu></tool-button><tool-button icon="pipe"></tool-button></div>
      <div class="col"><tool-button icon="override"></tool-button><tool-button icon="linework"></tool-button></div>
    </ribbon-panel>
    <ribbon-panel width="44" caption="Измерить">
      <div class="grid" style="--n:1"><tool-button icon="measuregray" menu></tool-button><tool-button icon="dimbig" menu></tool-button></div>
    </ribbon-panel>
    <ribbon-panel width="52" caption="Создание">
      <div class="grid" style="--n:2">
        <tool-button icon="group"></tool-button><tool-button icon="assembly"></tool-button>
        <tool-button icon="parts"></tool-button><tool-button icon="similar"></tool-button>
      </div>
    </ribbon-panel>
    <ribbon-panel width="66" caption="Режим" context><big-button icon="editfamily">Редактировать<br>семейство</big-button></ribbon-panel>
    <ribbon-panel width="100" caption="Инструменты соединения" context><big-button icon="beamgray" off>Редактировать<br>опорный элемент</big-button></ribbon-panel>
    <ribbon-panel width="126" caption="Рабочая плоскость" context>
      <big-button icon="plane">Редактировать<br>рабочую плоскость</big-button><span class="sep"></span>
      <big-button icon="newhost">Выбрать<br>новую</big-button>
    </ribbon-panel>
    <ribbon-panel width="88" caption="Армирование" context><big-button icon="rebar">Арматурный стержень</big-button></ribbon-panel>`;
}

class OptionsBar extends Part {
  static template = `
    <style>
      :host { display: flex; align-items: center; height: 17px; padding-left: 5px; background: #e3f2d7; color: #222; }
      .mode { width: 124px; border-right: 1px solid #b8c4ae; margin-right: 6px; white-space: nowrap; }
      button { height: 14px; width: 72px; border: 1px solid #aaa; background: #f7f7f7; white-space: nowrap; }
    </style>
    <span class="mode">Изменить | Каркас несущий</span>
    <button type="button">Вывести размеры</button>`;
}

class PanelHeader extends Part {
  static template = `
    <style>
      :host { display: flex; align-items: center; justify-content: space-between; height: 13px; padding: 0 2px; background: #f0f0f0; color: #444; white-space: nowrap; }
      button { width: 8px; height: 8px; }
    </style>
    <slot></slot><button type="button" aria-label="Закрыть"><ui-icon small name="close"></ui-icon></button>`;
}

// SCROLL BAR: start / size are the thumb's share of the track in percent
class ScrollTrack extends Part {
  static template = `
    <style>
      :host { display: flex; flex-direction: column; align-items: center; width: 11px; background: #eee; padding: 2px 0; }
      :host([flat]) { flex-direction: row; width: auto; height: 12px; padding: 0 2px; }
      .track { flex: 1; display: flex; flex-direction: inherit; align-self: stretch; }
      .thumb { background: #cdcdcd; }
    </style>
    <ui-icon small></ui-icon><div class="track"><span class="before"></span><span class="thumb"></span></div><ui-icon small></ui-icon>`;
  connectedCallback() {
    const names = this.hasAttribute('flat') ? ['lt', 'rt'] : ['up', 'dn'];
    this.shadowRoot.querySelectorAll('ui-icon').forEach((end, i) => end.setAttribute('name', names[i]));
    this.shadowRoot.querySelector('.before').style.flexBasis = this.getAttribute('start') + '%';
    this.shadowRoot.querySelector('.thumb').style.flexBasis = this.getAttribute('size') + '%';
  }
}

class PropertyPalette extends Part {
  static template = `
    <style>
      :host { display: flex; flex-direction: column; background: #f0f0f0; }
      .type { display: flex; align-items: center; height: 48px; padding: 0 1px 0 3px; gap: 4px; border-bottom: 1px solid #d8d8d8; }
      .thumb { background: #fff; --icon: 42px; }
      .type span { flex: 1; line-height: 10px; color: #444; }
      .filter { display: flex; align-items: center; height: 16px; gap: 4px; }
      .combo { display: flex; align-items: center; width: 199px; height: 14px; background: #e3e3e3; border: 1px solid #c4c4c4; padding-right: 2px; }
      select { flex: 1; appearance: none; height: 12px; padding-left: 2px; }
      .edit { display: flex; align-items: center; gap: 3px; --icon: 12px; white-space: nowrap; }
      .list { display: flex; height: 185px; overflow: hidden; }
      table { flex: none; table-layout: fixed; border-collapse: separate; border-spacing: 0; background: #fff; align-self: flex-start; width: 261px; color: #222; }
      td, th { height: 12px; line-height: 11px; padding: 0; border-bottom: 1px solid #ddd; border-right: 1px solid #ddd; white-space: nowrap; font-weight: normal; text-align: left; }
      tbody th { padding-left: 6px; }
      td { padding-left: 2px; }
      .cat th { padding-left: 2px; background: #dcdcdc; border-right: 0; }
      .cat td { background: #dcdcdc; padding: 0; }
      .off { color: #888; }
      td input[type=text] { display: block; width: 100%; height: 11px; line-height: 11px; }
      td.focus { box-shadow: inset 0 0 0 1px #111; }
      input[type=checkbox] { appearance: none; display: block; width: 9px; height: 9px; border: 1px solid #444; background: #fff; }
      .check { display: grid; width: 9px; height: 9px; }
      .check > * { grid-area: 1 / 1; }
      .check svg { width: 9px; height: 9px; pointer-events: none; }
      td.b { padding: 0; }
      td.b button { display: block; width: 7px; height: 11px; border: 1px solid #aaa; background: #e8e8e8; }
      .foot { display: flex; align-items: center; justify-content: space-between; height: 17px; padding: 0 3px 1px 2px; }
      a { color: #1f73ad; }
      .foot button { width: 48px; height: 12px; background: #ccc; color: #999; }
    </style>
    <panel-header>Свойства</panel-header>
    <div class="type"><div class="thumb"><ui-icon name="slab"></ui-icon></div>
      <span>СИБИТ_Плита_Перекрытия_Ширина 600 мм_ГОСТ<br>19570_74</span><ui-icon small name="down"></ui-icon></div>
    <div class="filter">
      <label class="combo"><select aria-label="Категория"><option>Каркас несущий (Прочее) (1)</option></select><ui-icon small name="chevron"></ui-icon></label>
      <button class="edit" type="button"><ui-icon name="edittype"></ui-icon>Изменить тип</button>
    </div>
    <div class="list">
      <table><colgroup><col style="width:128px"><col style="width:125px"><col style="width:8px"></colgroup><tbody></tbody></table>
      <scroll-track start="6" size="29"></scroll-track>
    </div>
    <div class="foot"><a href="#help">Справка по свойствам</a><button type="button">Применить</button></div>`;
  connectedCallback() {
    const rows = [
      ['Строительство'],
      ['В пачке, шт.', '5', 'off'],
      ['Мин. глубина опирания, мм', '120', 'off'],
      ['Шов между плит&lt;Антураж&gt;', 'Вид заполнения : Шов между п...', 'text'],
      ['Набор арматурных стержней'],
      ['Длина выпуска 1', '100,0', 'input'],
      ['Длина выпуска 2', '100,0', 'input'],
      ['Набор'],
      ['Скоба для устройства проема', '', 'flag'],
      ['Скоба_Отступ от торца', '0,0', 'input'],
      ['Скоба_Толщина стали', '5,0', 'input focus'],
      ['Материалы и отделка'],
      ['Материал несущих конструкций', '', 'text'],
      ['Несущие конструкции'],
      ['Защитный слой арматуры - Ве...', 'Защитный слой арматуры 1 &lt;2...', 'text'],
      ['Защитный слой арматуры - Н...', 'Защитный слой арматуры 1 &lt;2...', 'text']
    ];
    this.shadowRoot.querySelector('tbody').innerHTML = rows.map(([name, value, kind]) => {
      if (!kind) return `<tr class="cat"><th colspan="2">${name}</th><td><ui-icon small name="fold"></ui-icon></td></tr>`;
      let cell = value;
      let button = '';
      if (kind.startsWith('input')) cell = `<input type="text" aria-label="${name}" value="${value}">`;
      if (kind === 'flag') {
        cell = `<span class="check"><input type="checkbox" checked aria-label="${name}"><svg viewBox="0 0 9 9"><path d="M2 4.500 4 6.500 7.500 2.500" fill="none" stroke="#222"/></svg></span>`;
      }
      if (kind.startsWith('input') || kind === 'flag') button = '<button type="button" aria-label="Связать"></button>';
      return `<tr class="${kind === 'off' ? 'off' : ''}"><th>${name}</th><td class="${kind}">${cell}</td><td class="b">${button}</td></tr>`;
    }).join('');
  }
}

class ProjectBrowser extends Part {
  static template = `
    <style>
      :host { display: flex; flex-direction: column; min-height: 0; border-top: 1px solid #bbb; background: #f0f0f0; }
      .body { flex: 1; display: flex; min-height: 0; }
      .tree { flex: 1; margin: 0; padding: 0; list-style: none; background: #fff; overflow: hidden; color: #222; }
      li { display: flex; align-items: center; height: 12px; white-space: nowrap; }
      .cell { flex: none; width: 13px; height: 12px; display: flex; align-items: center; justify-content: center; background: none; }
      .line { background: linear-gradient(#ddd, #ddd) 6px 0 / 1px 100% no-repeat; }
      .tee { background: linear-gradient(#ddd, #ddd) 6px 0 / 1px 100% no-repeat, linear-gradient(#ddd, #ddd) 7px 6px / 8px 1px no-repeat; }
      .box { width: 7px; height: 7px; border: 1px solid #aaa; background: linear-gradient(#678, #678) 1px 2px / 3px 1px no-repeat #fff; }
      .plus { background: linear-gradient(#678, #678) 1px 2px / 3px 1px no-repeat, linear-gradient(#678, #678) 2px 1px / 1px 3px no-repeat, #fff; }
      .icon { width: 15px; --icon: 11px; }
      .text { padding: 0 1px; }
      .l1 .text { margin-left: 4px; }
      .l2 .text { margin-left: 4px; }
      .sel { background: #e0e0e0; }
      .bold { font-weight: bold; }
    </style>
    <panel-header>Диспетчер проекта - СИБИТ_ШаблонПроекта_r2017.2(28_04_21).rte</panel-header>
    <div class="body"><ul class="tree"></ul><scroll-track start="0" size="24"></scroll-track></div>
    <scroll-track flat start="0" size="56"></scroll-track>`;
  connectedCallback() {
    // [level, text, open state, icon, extra class]
    const nodes = [
      [0, 'Виды (Назначение вида)', '-', 'views', 'sel'],
      [1, 'В_Рабочие виды', '-'],
      [2, 'Фасад: В_АР_Ф_Южный'],
      [2, 'Фасад: В_АР_Ф_Северный'],
      [2, 'Фасад: В_АР_Ф_Западный'],
      [2, 'Фасад: В_АР_Ф_Восточный'],
      [2, '3D вид: {3D}', '', '', 'bold'],
      [2, 'План этажа: В_АР_ПЭ_01 Этаж'],
      [1, 'О_Фасады', '+'],
      [1, 'СИБИТ', '-'],
      [2, 'Разрез: СИБИТ_Плиты перекрытий'],
      [2, 'Разрез: СИБИТ_Перемычки'],
      [2, 'План этажа: СИБИТ_01_Этаж'],
      [0, 'Легенды', '+', 'legend'],
      [0, 'Ведомости/Спецификации (все)', '+', 'schedule'],
      [0, 'Листы (Раздел проекта)', '+', 'sheets'],
      [0, 'Семейства', '-', 'family'],
      [1, 'Аннотационные обозначения', '+'],
      [1, 'Балочные системы', '+'],
      [1, 'Витражные системы', '+'],
      [1, 'Воздуховоды', '+']
    ];
    this.shadowRoot.querySelector('.tree').innerHTML = nodes.map(([level, text, state, icon, cls]) => {
      let cells = '<span class="cell line"></span>'.repeat(level);
      cells += state
        ? `<span class="cell tee"><button type="button" class="box ${state === '+' ? 'plus' : ''}" aria-label="Развернуть"></button></span>`
        : '<span class="cell tee"></span>';
      if (icon) cells += `<span class="cell icon"><ui-icon name="${icon}"></ui-icon></span>`;
      return `<li class="l${level}">${cells}<span class="text ${cls || ''}">${text}</span></li>`;
    }).join('');
  }
}

class DocTabs extends Part {
  static template = `
    <style>
      :host { display: flex; height: 13px; background: #c6c6c6; align-items: center; color: #444; --icon: 11px; }
      .tab { display: flex; align-items: center; gap: 4px; height: 13px; width: 107px; padding-left: 3px; white-space: nowrap; line-height: 11px; }
      .second { width: 131px; }
      .active { background: #fdfdfd; width: 85px; padding-right: 3px; color: #222; }
      .active span { flex: 1; text-align: left; }
      .end { margin-left: auto; }
    </style>
    <button class="tab" type="button"><ui-icon name="section"></ui-icon>СИБИТ_Перемычки</button>
    <button class="tab second" type="button"><ui-icon name="section"></ui-icon>СИБИТ_Плиты перекрытий</button>
    <button class="tab active" type="button"><ui-icon name="house"></ui-icon><span>{3D}</span><ui-icon small name="close"></ui-icon></button>
    <ui-icon class="end" small name="overflow"></ui-icon>`;
}

class ViewCube extends Part {
  static template = `
    <style>
      :host { display: block; }
      svg { display: block; width: 100px; height: 84px; overflow: visible; }
      text { font: 8px Roboto, "Open Sans", sans-serif; fill: #777; }
    </style>
    <svg viewBox="1160 160 100 84">
      <defs><filter id="soft"><feGaussianBlur stdDeviation="2"/></filter></defs>
      <ellipse cx="1208" cy="206" rx="43" ry="31" fill="#f6f6f6" stroke="#c4c4c4" stroke-width=".8"/>
      <ellipse cx="1208" cy="205" rx="33" ry="23" fill="#fff" stroke="#ccc" stroke-width=".8"/>
      <ellipse cx="1209" cy="214" rx="17" ry="6" fill="#bbb" filter="url(#soft)"/>
      <g fill="none" stroke="#999" stroke-width=".9">
        <path d="M1163 212l5-3v6zM1169 208h6v7h-6zM1171 211h3M1214 232h6v4h-6zM1221 229h6v6h-6zM1223 232h3"/>
        <path d="M1237 196c2-5 8-4 11-1M1239 194l9 1"/>
      </g>
      <g stroke="#888" stroke-width=".8" stroke-linejoin="round">
        <path d="M1189 171l31-6 11 19-34 8z" fill="#f3f3f3"/>
        <path d="M1197 192l34-8-2 25-30 7z" fill="#f0f0f0"/>
        <path d="M1189 171l8 21 2 24-8-20z" fill="#dadada"/>
      </g>
      <text x="1201" y="205" transform="rotate(-6 1201 205)">Справа</text>
      <text x="1213" y="190" transform="rotate(-100 1213 190)" style="font-size:7px">Сверху</text>
    </svg>`;
}

class NavBar extends Part {
  static template = `
    <style>
      :host { display: flex; flex-direction: column; align-items: center; justify-content: space-between; width: 23px; height: 79px; border: 1px solid #aaa; border-radius: 4px; background: #f4f4f4; }
      .end { align-self: flex-end; margin: 0 1px; }
      hr { width: 17px; margin: 0; border: 0; border-top: 1px solid #bbb; }
      button { height: 16px; }
    </style>
    <ui-icon class="end" small name="knob"></ui-icon>
    <button type="button" aria-label="Штурвал"><ui-icon name="wheel"></ui-icon></button>
    <ui-icon small name="down"></ui-icon><hr>
    <button type="button" aria-label="Зумирование"><ui-icon mid name="zoomregion"></ui-icon></button>
    <ui-icon small name="down"></ui-icon>
    <ui-icon class="end" small name="knob"></ui-icon>`;
}

class ModelView extends Part {
  static template = `
    <style>
      :host { display: flex; min-height: 0; }
      .canvas { position: relative; flex: 1; min-width: 0; background: #fff; overflow: hidden; }
      .scene { display: block; width: 100%; height: 100%; }
      view-cube { position: absolute; right: 9px; top: 31px; }
      nav-bar { position: absolute; right: 1px; top: 115px; }
    </style>
    <div class="canvas">
      <svg class="scene" viewBox="277 129 992 535" preserveAspectRatio="xMidYMid slice">
        <defs>
          <linearGradient id="wall" x2="1" y2="1"><stop offset="0" stop-color="#545454"/><stop offset=".6" stop-color="#636363"/><stop offset="1" stop-color="#5c5c5c"/></linearGradient>
          <linearGradient id="brick" x2="0" y2="1"><stop offset="0" stop-color="#9c9a97"/><stop offset="1" stop-color="#949290"/></linearGradient>
        </defs>

        <!-- walls -->
        <path d="M790 181 905 417v198L790 377z" fill="url(#wall)" stroke="#444" stroke-width=".6"/>
        <path d="M905 417l25-4v198l-25 4z" fill="url(#brick)"/>
        <path d="M492 383l25 48v20l-25 5z" fill="#a3a19e"/>
        <path d="M494 403h9M492 421l20-2M498 437l16-3M505 410v9M503 437v15" stroke="#8b8987" fill="none"/>
        <path fill-rule="evenodd" d="M470 248 585 483v181h-8L470 445zM492 360v97l74 152v-78z" fill="url(#wall)"/>
        <path d="M492 360l79 160v20L492 383z" fill="#504d48"/>
        <path d="M493 383v-22l78 159v20" fill="none" stroke="#a59e92" stroke-width=".8"/>
        <path d="M585 483l25-4v185h-25z" fill="url(#brick)"/>
        <g id="bond" fill="none" stroke="#716f6d" stroke-opacity=".55"></g>

        <!-- reference planes -->
        <g fill="none" stroke="#4a9296" stroke-width=".9">
          <path d="M277 247 836 131" stroke-dasharray="25 26" stroke-dashoffset="21"/>
          <path d="M277 485 1030 328" stroke-dasharray="25 26" stroke-dashoffset="21"/>
          <path d="M289 546 1161 364" stroke-dasharray="25 26"/>
          <path d="M858 664 1161 601" stroke-dasharray="25 26" stroke-dashoffset="16"/>
          <path d="M1030 129v199M1161 364v237M1050 129l111 235M1030 328l131 273" stroke-dasharray="20 15" stroke-dashoffset="6"/>
          <path d="M1020 330l10-2 4 9M1151 599l10 2v-10M1155 363l6 1v8"/>
        </g>

        <!-- slab, both parts -->
        <path d="M342 376l14-3M695 303l16-4" stroke="#888" stroke-width=".8"/>
        <g fill="#3c64eb" fill-opacity=".58" stroke="#2a3f9c" stroke-width=".7" stroke-opacity=".8">
          <path d="M343 337 498 305l16 32v17L359 386l-16-34z"/>
          <path d="M338 326l13-3 5 14v15z" stroke="none"/>
          <path d="M498 305l12-3 13 30-9 5z" fill-opacity=".45" stroke="none"/>
          <path d="M525 299l154-32 15 31 1 17-148 31-7-14z"/>
        </g>
        <g fill="#1d3fc0" fill-opacity=".42">
          <path d="M359 369 514 337v17L359 386z"/>
          <path d="M343 337l16 32v17l-16-34z"/>
          <path d="M540 332l154-34 1 17-148 31z"/>
          <path d="M343 337l13-3v18l9 18-6 16-16-34z"/>
        </g>
        <path d="M370 378 514 348M544 340 695 309" fill="none" stroke="#8398b4" stroke-width="2" stroke-opacity=".7"/>
        <g fill="none" stroke="#243e96" stroke-width=".8" stroke-opacity=".75">
          <path d="M347 341 500 309M350 345 501 313M353 351 503 319"/>
          <path d="M359 373 514 341M359 377 514 345M360 382 514 350"/>
          <path d="M527 304l152-31M529 308l151-31M532 313l120-25"/>
          <path d="M541 336l153-34M543 339l152-33M545 342l150-31"/>
          <path d="M679 267l1 14M679 267l12 33M498 305l27-6M514 337l26-5M512 305l8 25M343 352l22-14"/>
        </g>
        <path d="M500 305l4-8 7-1-3 8zM509 303v6M512 301v6" fill="none" stroke="#28466b" stroke-width="1"/>

        <!-- orbit cursor -->
        <g fill="none" stroke="#222" stroke-width="1">
          <path d="M369 310c4-4 10-1 10 4M378 320c-5 3-10 0-10-5" stroke-dasharray="4 1"/>
          <circle cx="374" cy="315" r="1.800"/>
          <path d="M366.500 310v5h5zM380.500 320v-5h-5z"/>
        </g>
      </svg>
      <view-cube></view-cube>
      <nav-bar></nav-bar>
    </div>
    <scroll-track start="49" size="2"></scroll-track>`;
  connectedCallback() {
    // mortar joints on the two wall ends
    let d = '';
    for (let y = 498; y < 650; y += 33) d += `M588 ${y + 2}l20-3M588 ${y + 18}l20-2M599 ${y + 1}v16`;
    for (let y = 430; y < 600; y += 33) d += `M908 ${y + 2}l20-3M908 ${y + 18}l20-2M918 ${y + 1}v16`;
    this.shadowRoot.getElementById('bond').innerHTML = `<path d="${d}"/>`;
  }
}

class ViewBar extends Part {
  static template = `
    <style>
      :host { display: flex; align-items: center; height: 13px; background: #eee; --icon: 11px; --cell: 14px; }
      .scale { width: 50px; padding-left: 16px; text-align: left; color: #222; }
      scroll-track { flex: 1; }
    </style>
    <button class="scale" type="button">1 : 100</button>
    <tool-button icon="detail"></tool-button><tool-button icon="style"></tool-button><tool-button icon="sun"></tool-button>
    <tool-button icon="shadow"></tool-button><tool-button icon="render"></tool-button><tool-button icon="crop"></tool-button>
    <tool-button icon="crop2"></tool-button><tool-button icon="lock"></tool-button><tool-button icon="glasses"></tool-button>
    <tool-button icon="bulb" style="--icon:8px"></tool-button><tool-button icon="worksharing"></tool-button><tool-button icon="crop2"></tool-button>
    <tool-button icon="lock"></tool-button><tool-button icon="constraint"></tool-button>
    <scroll-track flat start="50" size="2"></scroll-track>
    <ui-icon small name="grip"></ui-icon>`;
}

class StatusBar extends Part {
  static template = `
    <style>
      :host { display: flex; align-items: center; height: 16px; padding-top: 2px; background: #cacaca; color: #222; --icon: 12px; }
      .message { width: 522px; padding-left: 1px; }
      .combo { display: flex; align-items: center; width: 137px; height: 13px; background: #fff; padding-right: 2px; }
      select { flex: 1; appearance: none; height: 13px; padding-left: 2px; color: #777; }
      .count { width: 18px; }
      .gap { width: 4px; }
      .right { display: flex; align-items: center; margin-left: auto; gap: 1px; padding-right: 36px; }
    </style>
    <span class="message">Перемещение мыши при нажатой кнопке - вращение вида.</span>
    <tool-button icon="editable"></tool-button><span class="gap"></span>
    <label class="combo"><select aria-label="Рабочий набор"><option></option></select><ui-icon small name="chevron"></ui-icon></label><span class="gap"></span>
    <tool-button icon="press"></tool-button><span class="count">:0</span>
    <tool-button icon="options"></tool-button><tool-button icon="optgray"></tool-button>
    <label class="combo"><select aria-label="Вариант"><option>Главная модель</option></select><ui-icon small name="chevron"></ui-icon></label>
    <div class="right">
      <tool-button icon="selbulb"></tool-button><tool-button icon="sellink"></tool-button><tool-button icon="selpin"></tool-button>
      <tool-button icon="selface"></tool-button><tool-button icon="seldrag"></tool-button><tool-button icon="gear"></tool-button>
      <tool-button icon="filter"></tool-button><span class="count">:1</span>
    </div>`;
}

class TaskBar extends Part {
  static template = `
    <style>
      :host { display: flex; align-items: center; height: 27px; background: #1b1a19; color: #f0f0f0; }
      .apps { display: flex; --icon: 16px; }
      .app { display: flex; align-items: center; justify-content: center; width: 33px; height: 27px; }
      .run { background: linear-gradient(#70b4dd, #70b4dd) 50% 100% / 27px 2px no-repeat; }
      .active { background: linear-gradient(#70b4dd, #70b4dd) 50% 100% / 33px 2px no-repeat, #454545; }
      .tray { display: flex; align-items: center; margin-left: auto; --icon: 12px; }
      .lang { width: 24px; padding-left: 5px; }
      .desk { padding-right: 2px; }
      .clock { width: 44px; text-align: center; line-height: 10px; }
      .notes { position: relative; width: 36px; padding-left: 8px; }
      .badge { position: absolute; left: 14px; top: 4px; width: 9px; height: 9px; border-radius: 50%; background: #333; border: 1px solid #ddd; font-size: 7px; line-height: 7px; text-align: center; }
    </style>
    <div class="apps"></div>
    <div class="tray">
      <span class="desk">Рабочий стол</span><ui-icon small name="more"></ui-icon>
      <tool-button icon="tray" style="margin-left:4px"></tool-button><tool-button icon="network"></tool-button><tool-button icon="sound"></tool-button>
      <span class="lang">РУС</span>
      <div class="clock">15:28<br>05.05.2021</div>
      <div class="notes"><ui-icon name="note"></ui-icon><span class="badge">6</span></div>
    </div>`;
  connectedCallback() {
    const apps = ['win', 'search', 'taskview', 'figure', 'flower', 'chrome run', 'folder run', 'outlook', 'skype run',
      'hangouts run', 'revit active', 'obs run', 'telegram run', 'foobar run', 'word run'];
    this.shadowRoot.querySelector('.apps').innerHTML = apps.map((app) => {
      const [name, state = ''] = app.split(' ');
      return `<button type="button" class="app ${state}" aria-label="${name}"><ui-icon name="${name}"></ui-icon></button>`;
    }).join('');
  }
}

class RevitApp extends Part {
  static template = `
    <style>
      :host { display: flex; flex-direction: column; height: 100vh; }
      main { flex: 1; display: grid; grid-template-columns: 275px 1fr; min-height: 0; gap: 2px; padding: 2px 0 0; background: #cacaca; }
      .side { display: flex; flex-direction: column; gap: 2px; min-height: 0; border-right: 2px solid #ddd; }
      project-browser { flex: 1; }
      .docs { display: flex; flex-direction: column; min-height: 0; min-width: 0; }
      model-view { flex: 1; }
    </style>
    <title-bar></title-bar>
    <ribbon-tabs></ribbon-tabs>
    <ribbon-bar></ribbon-bar>
    <options-bar></options-bar>
    <main>
      <div class="side"><property-palette></property-palette><project-browser></project-browser></div>
      <div class="docs"><doc-tabs></doc-tabs><model-view></model-view><view-bar></view-bar></div>
    </main>
    <status-bar></status-bar>
    <task-bar></task-bar>`;
}

customElements.define('ui-icon', UiIcon);
customElements.define('tool-button', ToolButton);
customElements.define('title-bar', TitleBar);
customElements.define('ribbon-tabs', RibbonTabs);
customElements.define('ribbon-panel', RibbonPanel);
customElements.define('big-button', BigButton);
customElements.define('ribbon-bar', RibbonBar);
customElements.define('options-bar', OptionsBar);
customElements.define('panel-header', PanelHeader);
customElements.define('scroll-track', ScrollTrack);
customElements.define('property-palette', PropertyPalette);
customElements.define('project-browser', ProjectBrowser);
customElements.define('doc-tabs', DocTabs);
customElements.define('view-cube', ViewCube);
customElements.define('nav-bar', NavBar);
customElements.define('model-view', ModelView);
customElements.define('view-bar', ViewBar);
customElements.define('status-bar', StatusBar);
customElements.define('task-bar', TaskBar);
customElements.define('revit-app', RevitApp);
</script>
</body>
</html>
